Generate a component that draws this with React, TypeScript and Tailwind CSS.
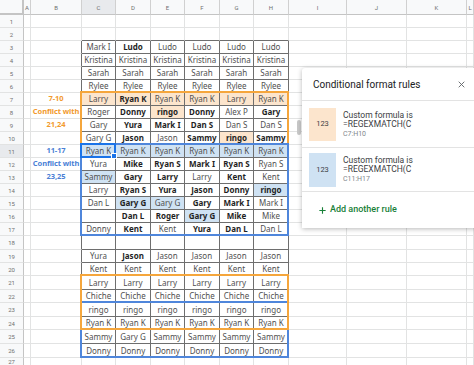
import React from "react";

const COLS = [
  { w: "w-[24px]", label: "" },
  { w: "w-[7px]", label: "A" },
  { w: "w-[51px]", label: "B" },
  { w: "w-[34px]", label: "C" },
  { w: "w-[35px]", label: "D" },
  { w: "w-[34px]", label: "E" },
  { w: "w-[35px]", label: "F" },
  { w: "w-[34px]", label: "G" },
  { w: "w-[35px]", label: "H" },
  { w: "w-[58px]", label: "I" },
  { w: "w-[60px]", label: "J" },
  { w: "w-[60px]", label: "K" },
  { w: "w-[7px]", label: "L" },
];
const COL_W = [24, 7, 51, 34, 35, 34, 35, 34, 35, 58, 60, 60, 7];

// row index 1..27
const ROW_H_CLS: Record<number, string> = {};
const ROW_H: Record<number, number> = {};
for (let r = 1; r <= 17; r++) {
  ROW_H_CLS[r] = "h-[13px]";
  ROW_H[r] = 13;
}
const tail = [14, 13, 13, 14, 13, 14, 13, 14, 14];
tail.forEach((h, i) => {
  ROW_H_CLS[18 + i] = h === 14 ? "h-[14px]" : "h-[13px]";
  ROW_H[18 + i] = h;
});
ROW_H_CLS[27] = "h-[8px]";
ROW_H[27] = 8;

const HEADER_H = 15;
const rowTop = (r: number) => {
  let y = HEADER_H;
  for (let i = 1; i < r; i++) y += ROW_H[i];
  return y;
};
const colLeft = (c: number) => {
  let x = 0;
  for (let i = 0; i < c; i++) x += COL_W[i];
  return x;
};

const rep = (s: string) => [s, s, s, s, s, s];

const DATA: Record<number, string[]> = {
  3: ["Mark I", "*Ludo", "Ludo", "Ludo", "Ludo", "Ludo"],
  4: rep("Kristina"),
  5: rep("Sarah"),
  6: rep("Rylee"),
  7: ["^Larry", "^*Ryan K", "^Ryan K", "^Ryan K", "^Larry", "^Ryan K"],
  8: ["Roger", "*Donny", "^*ringo", "*Donny", "Alex P", "*Gary"],
  9: ["Gary", "*Yura", "*Mark I", "*Dan S", "Dan S", "Dan S"],
  10: ["Gary G", "*Jason", "Jason", "*Sammy", "^*ringo", "*Sammy"],
  11: rep("~Ryan K"),
  12: ["Yura", "*Mike", "*Ryan S", "*Mark I", "*Ryan S", "Ryan S"],
  13: ["~Sammy", "*Gary", "*Larry", "Larry", "*Kent", "Kent"],
  14: ["Larry", "*Ryan S", "*Yura", "*Jason", "*Donny", "~*ringo"],
  15: ["Dan L", "~*Gary G", "~Gary G", "*Gary", "*Mark I", "Mark I"],
  16: ["", "*Dan L", "*Roger", "~*Gary G", "*Mike", "Mike"],
  17: ["Donny", "*Kent", "Kent", "*Yura", "*Dan L", "Dan L"],
  18: rep(""),
  19: ["Yura", "*Jason", "Jason", "Jason", "Jason", "Jason"],
  20: rep("Kent"),
  21: rep("Larry"),
  22: rep("Chiche"),
  23: rep("ringo"),
  24: rep("Ryan K"),
  25: ["Sammy", "Gary G", "Sammy", "Sammy", "Sammy", "Sammy"],
  26: rep("Donny"),
};

const B_LABELS: Record<number, { t: string; c: "o" | "b" }> = {
  7: { t: "7-10", c: "o" },
  8: { t: "Conflict with", c: "o" },
  9: { t: "21,24", c: "o" },
  11: { t: "11-17", c: "b" },
  12: { t: "Conflict with", c: "b" },
  13: { t: "23,25", c: "b" },
};

function parse(s: string) {
  let bg = "";
  let bold = false;
  let t = s;
  while (t.length && "^~*".includes(t[0])) {
    if (t[0] === "^") bg = "bg-[#fce5cd]";
    if (t[0] === "~") bg = "bg-[#cfe2f3]";
    if (t[0] === "*") bold = true;
    t = t.slice(1);
  }
  return { bg, bold, t };
}

function Cell({ r, c }: { r: number; c: number }) {
  const rightDark = r >= 3 && r <= 26 && c >= 2 && c <= 8;
  const bottomDark = r >= 2 && r <= 26 && c >= 3 && c <= 8;
  let cls = `${COLS[c].w} shrink-0 box-border border-r border-b flex items-center justify-center overflow-hidden whitespace-nowrap `;
  cls += rightDark ? "border-r-[#6e6e6e] " : "border-r-[#e2e3e3] ";
  cls += bottomDark ? "border-b-[#6e6e6e] " : "border-b-[#e2e3e3] ";
  let content: React.ReactNode = null;
  if (c >= 3 && c <= 8 && DATA[r]) {
    const p = parse(DATA[r][c - 3]);
    cls += p.bg + " ";
    content = (
      <span
        className={
          p.bold
            ? "text-[8px] font-bold text-[#1f1f1f] leading-none"
            : "text-[8px] text-[#505050] leading-none"
        }
      >
        {p.t}
      </span>
    );
  }
  if (c === 2 && B_LABELS[r]) {
    const l = B_LABELS[r];
    content = (
      <span
        className={
          l.c === "o"
            ? "text-[7.5px] font-bold text-[#f29a2e] leading-none tracking-[-0.1px]"
            : "text-[7.5px] font-bold text-[#4a7fd6] leading-none tracking-[-0.1px]"
        }
      >
        {l.t}
      </span>
    );
  }
  return <div className={cls}>{content}</div>;
}

function Box({ r1, r2, color }: { r1: number; r2: number; color: string }) {
  const top = rowTop(r1) - 2;
  const height = rowTop(r2 + 1) - rowTop(r1) + 2;
  const left = colLeft(3) - 2;
  const width = colLeft(9) - colLeft(3) + 2;
  return (
    <div
      className={`absolute border-2 ${color} pointer-events-none`}
      style={{ top, left, width, height }}
    />
  );
}

export default function App() {
  const rows = [];
  for (let r = 1; r <= 27; r++) rows.push(r);
  return (
    <div className="relative w-[474px] h-[365px] overflow-hidden bg-white font-['Noto_Sans',sans-serif]">
      {/* column header */}
      <div className="flex h-[15px]">
        {COLS.map((col, c) =>
          c === 0 ? (
            <div
              key={c}
              className={`${col.w} shrink-0 box-border bg-[#f8f9fa] border-r-2 border-b-2 border-[#c4c4c4]`}
            />
          ) : (
            <div
              key={c}
              className={`${col.w} shrink-0 box-border border-r border-b border-r-[#d0d0d0] border-b-[#c4c4c4] flex items-center justify-center text-[6px] text-[#707070] font-['Roboto',sans-serif] ${
                c === 3 ? "bg-[#e8eaed]" : "bg-[#f8f9fa]"
              }`}
            >
              {col.label}
            </div>
          )
        )}
      </div>
      {rows.map((r) => (
        <div key={r} className={`flex ${ROW_H_CLS[r]}`}>
          <div
            className={`w-[24px] shrink-0 box-border border-r border-b border-r-[#c4c4c4] border-b-[#e2e3e3] flex items-center justify-center text-[6px] text-[#707070] font-['Roboto',sans-serif] ${
              r === 11 ? "bg-[#e8eaed]" : "bg-[#f8f9fa]"
            }`}
          >
            {r}
          </div>
          {COLS.slice(1).map((_, i) => (
            <Cell key={i} r={r} c={i + 1} />
          ))}
        </div>
      ))}

      {/* range outlines */}
      <Box r1={23} r2={26} color="border-[#4f86db]" />
      <Box r1={21} r2={24} color="border-[#f5a63c]" />
      <Box r1={7} r2={10} color="border-[#f5a63c]" />
      <Box r1={11} r2={17} color="border-[#4f86db]" />

      {/* selected cell C11 */}
      <div
        className="absolute border-2 border-[#1a73e8]"
        style={{ top: rowTop(11) - 2, left: colLeft(3) - 2, width: COL_W[3] + 2, height: ROW_H[11] + 2 }}
      >
        <div className="absolute -right-[3px] -bottom-[3px] w-[4px] h-[4px] bg-[#1a73e8] border border-white box-content" />
      </div>

      {/* sheet scrollbar thumb */}
      <div className="absolute left-[297px] top-[120px] w-[4px] h-[15px] rounded-full bg-[#c8c8c8]" />

      {/* conditional format panel */}
      <div className="absolute left-[302px] top-[68px] w-[174px] h-[160px] bg-white rounded-tl-[3px] shadow-[0_1px_5px_rgba(0,0,0,0.28)] flex flex-col font-['Roboto',sans-serif]">
        <div className="h-[33px] shrink-0 flex items-center justify-between pl-[11px] pr-[11px] border-b border-[#e3e3e3]">
          <span className="text-[10px] text-[#202124]">Conditional format rules</span>
          <svg width="7" height="7" viewBox="0 0 10 10" className="text-[#5f6368]">
            <path d="M1 1 L9 9 M9 1 L1 9" stroke="currentColor" strokeWidth="1.3" />
          </svg>
        </div>
        <div className="h-[47px] shrink-0 flex items-center pl-[7px] gap-[7px] border-b border-[#e3e3e3]">
          <div className="w-[27px] h-[33px] bg-[#fce5cd] flex items-center justify-center text-[7.5px] text-[#3c4043]">
            123
          </div>
          <div className="flex flex-col leading-none">
            <span className="text-[8.5px] text-[#3c4043] h-[9px]">Custom formula is</span>
            <span className="text-[8.5px] text-[#3c4043] h-[10px]">=REGEXMATCH(C</span>
            <span className="text-[7px] text-[#80868b] mt-[1px]">C7:H10</span>
          </div>
        </div>
        <div className="h-[44px] shrink-0 flex items-center pl-[7px] gap-[7px] border-b border-[#e3e3e3]">
          <div className="w-[27px] h-[34px] bg-[#cfe2f3] flex items-center justify-center text-[7.5px] text-[#3c4043]">
            123
          </div>
          <div className="flex flex-col leading-none">
            <span className="text-[8.5px] text-[#3c4043] h-[9px]">Custom formula is</span>
            <span className="text-[8.5px] text-[#3c4043] h-[10px]">=REGEXMATCH(C</span>
            <span className="text-[7px] text-[#80868b] mt-[1px]">C11:H17</span>
          </div>
        </div>
        <div className="flex-1 flex items-center pl-[17px] gap-[4px] text-[#188038]">
          <svg width="7" height="7" viewBox="0 0 10 10">
            <path d="M5 0.5 V9.5 M0.5 5 H9.5" stroke="currentColor" strokeWidth="1.6" />
          </svg>
          <span className="text-[9px] font-medium">Add another rule</span>
        </div>
      </div>
    </div>
  );
}
